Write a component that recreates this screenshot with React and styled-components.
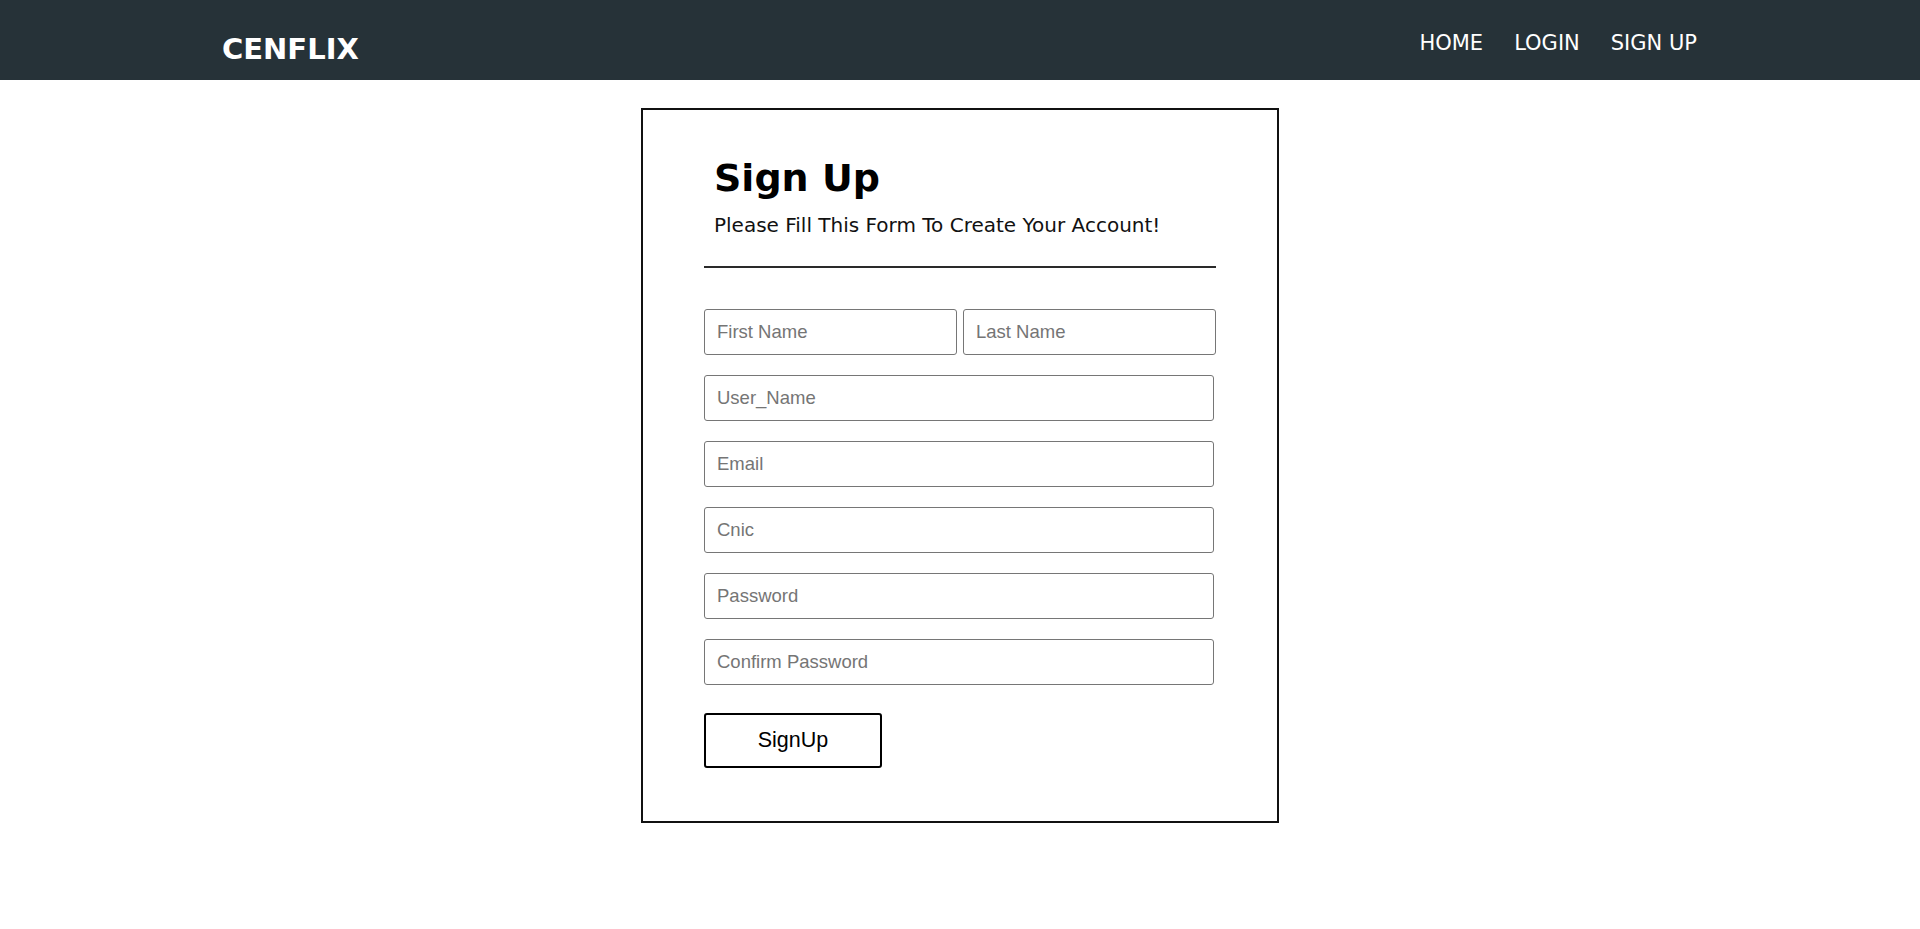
import styled, { createGlobalStyle } from "styled-components";

const GlobalStyle = createGlobalStyle`
  * {
    box-sizing: border-box;
  }
  body {
    margin: 0;
    background: #ffffff;
    font-family: "DejaVu Sans", "Liberation Sans", sans-serif;
  }
`;

const Navbar = styled.nav`
  display: flex;
  justify-content: space-between;
  align-items: flex-start;
  height: 80px;
  padding: 0 223px 0 222px;
  background-color: #263238;
`;

const Logo = styled.span`
  margin-top: 35px;
  color: #ffffff;
  font-size: 29px;
  font-weight: 700;
  line-height: 29px;
`;

const NavLinks = styled.ul`
  display: flex;
  gap: 31px;
  margin: 33px 0 0;
  padding: 0;
  list-style: none;
`;

const NavLink = styled.a`
  color: #ffffff;
  font-size: 21px;
  line-height: 20px;
  text-decoration: none;
  cursor: pointer;
`;

const Card = styled.div`
  width: 638px;
  margin: 28px auto 0;
  padding: 0 61px 53px;
  border: 2px solid #111111;
`;

const Header = styled.div`
  padding-left: 10px;
`;

const Title = styled.h1`
  margin: 49px 0 0;
  font-size: 38px;
  font-weight: 700;
  line-height: 38px;
  color: #000000;
`;

const Subtitle = styled.p`
  margin: 18px 0 0;
  font-size: 20px;
  line-height: 20px;
  color: #111111;
`;

const Divider = styled.hr`
  margin: 31px 0 41px;
  border: none;
  border-top: 2px solid #2a2a2a;
`;

const Form = styled.form`
  display: flex;
  flex-direction: column;
  gap: 20px;
`;

const Row = styled.div`
  display: flex;
  justify-content: space-between;
`;

const Input = styled.input`
  width: ${(props) => (props.half ? "253px" : "510px")};
  height: 46px;
  padding: 0 12px;
  border: 1px solid #767676;
  border-radius: 3px;
  font-family: "Liberation Sans", Arial, sans-serif;
  font-size: 18.5px;
  color: #000000;
  outline: none;
  &::placeholder {
    color: #757575;
  }
`;

const Button = styled.button`
  width: 178px;
  height: 55px;
  margin-top: 8px;
  background-color: #ffffff;
  border: 2px solid #000000;
  border-radius: 3px;
  font-family: "Liberation Sans", Arial, sans-serif;
  font-size: 21.5px;
  color: #000000;
  cursor: pointer;
`;

function App() {
  return (
    <>
      <GlobalStyle />
      <Navbar>
        <Logo>CENFLIX</Logo>
        <NavLinks>
          <li>
            <NavLink>HOME</NavLink>
          </li>
          <li>
            <NavLink>LOGIN</NavLink>
          </li>
          <li>
            <NavLink>SIGN UP</NavLink>
          </li>
        </NavLinks>
      </Navbar>
      <Card>
        <Header>
          <Title>Sign Up</Title>
          <Subtitle>Please Fill This Form To Create Your Account!</Subtitle>
        </Header>
        <Divider />
        <Form onSubmit={(e) => e.preventDefault()}>
          <Row>
            <Input half type="text" placeholder="First Name" />
            <Input half type="text" placeholder="Last Name" />
          </Row>
          <Input type="text" placeholder="User_Name" />
          <Input type="email" placeholder="Email" />
          <Input type="text" placeholder="Cnic" />
          <Input type="password" placeholder="Password" />
          <Input type="password" placeholder="Confirm Password" />
          <div>
            <Button type="submit">SignUp</Button>
          </div>
        </Form>
      </Card>
    </>
  );
}

export default App;
